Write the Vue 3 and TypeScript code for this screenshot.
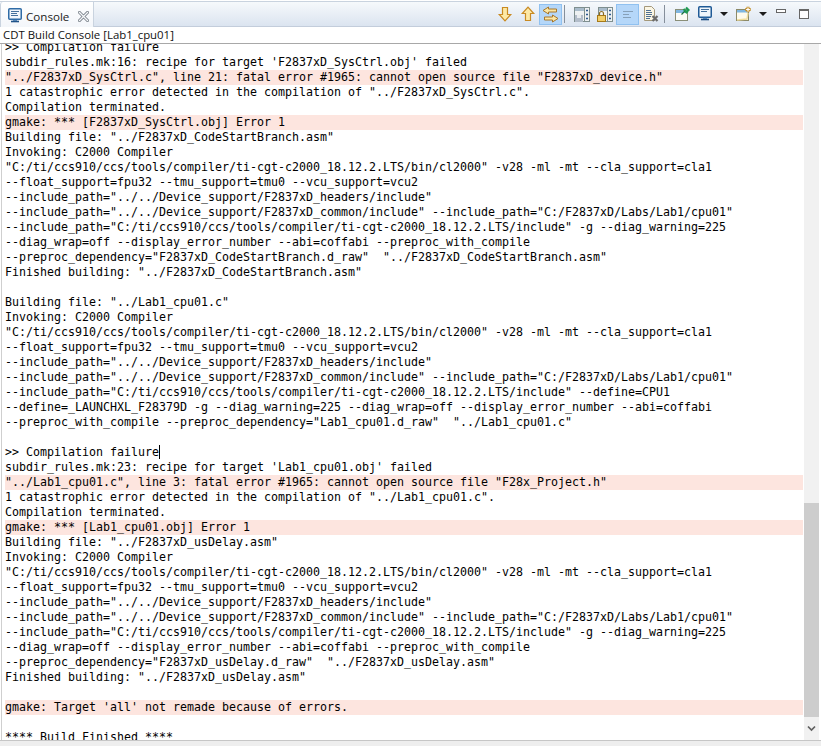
<script setup lang="ts">
type Line = { text: string; error?: boolean };
const raw: string = `>> Compilation failure
subdir_rules.mk:16: recipe for target 'F2837xD_SysCtrl.obj' failed
!"../F2837xD_SysCtrl.c", line 21: fatal error #1965: cannot open source file "F2837xD_device.h"
1 catastrophic error detected in the compilation of "../F2837xD_SysCtrl.c".
Compilation terminated.
!gmake: *** [F2837xD_SysCtrl.obj] Error 1
Building file: "../F2837xD_CodeStartBranch.asm"
Invoking: C2000 Compiler
"C:/ti/ccs910/ccs/tools/compiler/ti-cgt-c2000_18.12.2.LTS/bin/cl2000" -v28 -ml -mt --cla_support=cla1
--float_support=fpu32 --tmu_support=tmu0 --vcu_support=vcu2
--include_path="../../Device_support/F2837xD_headers/include"
--include_path="../../Device_support/F2837xD_common/include" --include_path="C:/F2837xD/Labs/Lab1/cpu01"
--include_path="C:/ti/ccs910/ccs/tools/compiler/ti-cgt-c2000_18.12.2.LTS/include" -g --diag_warning=225
--diag_wrap=off --display_error_number --abi=coffabi --preproc_with_compile
--preproc_dependency="F2837xD_CodeStartBranch.d_raw"  "../F2837xD_CodeStartBranch.asm"
Finished building: "../F2837xD_CodeStartBranch.asm"

Building file: "../Lab1_cpu01.c"
Invoking: C2000 Compiler
"C:/ti/ccs910/ccs/tools/compiler/ti-cgt-c2000_18.12.2.LTS/bin/cl2000" -v28 -ml -mt --cla_support=cla1
--float_support=fpu32 --tmu_support=tmu0 --vcu_support=vcu2
--include_path="../../Device_support/F2837xD_headers/include"
--include_path="../../Device_support/F2837xD_common/include" --include_path="C:/F2837xD/Labs/Lab1/cpu01"
--include_path="C:/ti/ccs910/ccs/tools/compiler/ti-cgt-c2000_18.12.2.LTS/include" --define=CPU1
--define=_LAUNCHXL_F28379D -g --diag_warning=225 --diag_wrap=off --display_error_number --abi=coffabi
--preproc_with_compile --preproc_dependency="Lab1_cpu01.d_raw"  "../Lab1_cpu01.c"

>> Compilation failure
subdir_rules.mk:23: recipe for target 'Lab1_cpu01.obj' failed
!"../Lab1_cpu01.c", line 3: fatal error #1965: cannot open source file "F28x_Project.h"
1 catastrophic error detected in the compilation of "../Lab1_cpu01.c".
Compilation terminated.
!gmake: *** [Lab1_cpu01.obj] Error 1
Building file: "../F2837xD_usDelay.asm"
Invoking: C2000 Compiler
"C:/ti/ccs910/ccs/tools/compiler/ti-cgt-c2000_18.12.2.LTS/bin/cl2000" -v28 -ml -mt --cla_support=cla1
--float_support=fpu32 --tmu_support=tmu0 --vcu_support=vcu2
--include_path="../../Device_support/F2837xD_headers/include"
--include_path="../../Device_support/F2837xD_common/include" --include_path="C:/F2837xD/Labs/Lab1/cpu01"
--include_path="C:/ti/ccs910/ccs/tools/compiler/ti-cgt-c2000_18.12.2.LTS/include" -g --diag_warning=225
--diag_wrap=off --display_error_number --abi=coffabi --preproc_with_compile
--preproc_dependency="F2837xD_usDelay.d_raw"  "../F2837xD_usDelay.asm"
Finished building: "../F2837xD_usDelay.asm"

!gmake: Target 'all' not remade because of errors.

**** Build Finished ****`;
const lines: Line[] = raw.split("\n").map((l: string) =>
  l.startsWith("!") ? { text: l.slice(1), error: true } : { text: l }
);
</script>

<template>
  <div class="view">
    <div class="topbar">
      <div class="tab">
        <svg class="tabicon" width="16" height="16" viewBox="0 0 16 16">
          <rect x="1.75" y="0.75" width="12.5" height="10.5" rx="1" fill="#f1f6fb" stroke="#2f6ba6" stroke-width="1.5" />
          <path d="M4 3.5h8M4 5.5h6M4 7.5h7" stroke="#44709c" />
          <path d="M4 13.5h8" stroke="#1f5288" stroke-width="1.6" />
          <path d="M6 12h4" stroke="#2f6ba6" stroke-width="1.4" />
        </svg>
        <span class="tabname">Console</span>
        <svg class="tabclose" width="11" height="11" viewBox="0 0 11 11">
          <path d="M1.5 1.5l8 8M9.5 1.5l-8 8" stroke="#6f7780" stroke-width="3" stroke-linecap="square" />
          <path d="M1.5 1.5l8 8M9.5 1.5l-8 8" stroke="#f7f8fa" stroke-width="1.4" stroke-linecap="square" />
        </svg>
      </div>
      <div class="tools">
        <span class="tool">
          <svg width="16" height="16" viewBox="0 0 16 16"><path d="M5.5 1.5h5v7h3.2L8 14.8 2.3 8.5h3.2z" fill="#fde9a6" stroke="#c98a22" stroke-width="1.2" /></svg>
        </span>
        <span class="tool">
          <svg width="16" height="16" viewBox="0 0 16 16"><path d="M5.5 14.5h5v-7h3.2L8 1.2 2.3 7.5h3.2z" fill="#fde9a6" stroke="#c98a22" stroke-width="1.2" /></svg>
        </span>
        <span class="tool on">
          <svg width="17" height="17" viewBox="0 0 17 17"><path d="M6.5 1L1 4.5 6.5 8V6h8V3h-8z" fill="#fce7a4" stroke="#a8772a" /><path d="M10.5 9L16 12.5 10.5 16v-2h-8v-3h8z" fill="#fce7a4" stroke="#a8772a" /></svg>
        </span>
        <span class="sep"></span>
        <span class="tool">
          <svg width="16" height="16" viewBox="0 0 16 16"><rect x="0.5" y="1.5" width="15" height="14" fill="#eef1f2" stroke="#7f8f8f" /><rect x="1" y="2" width="9" height="3" fill="#a9bccb" /><path d="M10.5 1.5v14" stroke="#7f8f8f" /><path d="M12 4.5h2M12 8.5h2M12 12.5h2" stroke="#2c5a90" stroke-width="1.5" /><rect x="1" y="9" width="8" height="7" fill="#b3bdca" /><rect x="3" y="9" width="4" height="3" fill="#e7ebef" /></svg>
        </span>
        <span class="tool">
          <svg width="16" height="16" viewBox="0 0 16 16"><rect x="1.5" y="1.5" width="14" height="14" fill="#f1f3f2" stroke="#7f8f8f" /><rect x="2" y="2" width="8" height="3" fill="#a9bccb" /><path d="M10.5 1.5v14" stroke="#7f8f8f" /><path d="M12 4.5h2M12 8.5h2M12 12.5h2" stroke="#2c5a90" stroke-width="1.5" /><rect x="0.5" y="9.5" width="8" height="6" fill="#f3cf68" stroke="#a67a1a" /><path d="M2.5 9.5V7.5a2 2 0 0 1 4 0v2" fill="none" stroke="#8a6a20" stroke-width="1.2" /></svg>
        </span>
        <span class="tool on">
          <svg width="16" height="16" viewBox="0 0 16 16"><path d="M3 5.5h10M3 8.5h6M3 11.5h8" stroke="#86a0b8" /></svg>
        </span>
        <span class="tool">
          <svg width="16" height="16" viewBox="0 0 16 16"><path d="M1.5 0.5h7l3 3v11h-10z" fill="#fbf6e4" stroke="#a4987a" /><path d="M3 4.5h5M3 6.5h6M3 8.5h6M3 10.5h5M3 12.5h4" stroke="#4f7093" /><path d="M9.5 10l5 5M14.5 10l-5 5" stroke="#6c6c6c" stroke-width="2.2" /></svg>
        </span>
        <span class="sep"></span>
        <span class="tool">
          <svg width="16" height="16" viewBox="0 0 16 16"><rect x="1.5" y="3.5" width="12" height="11" fill="#fbfbf6" stroke="#8a8f78" /><rect x="2" y="4" width="11" height="3" fill="#7fb6e0" /><path d="M7.5 8.5l3.5-3.5" stroke="#17713f" stroke-width="1.3" /><path d="M9.5 3l4 4M12 1.5l2.5 2.5-3 3" fill="none" stroke="#1f9a52" stroke-width="2.2" /></svg>
        </span>
        <span class="tool">
          <svg width="16" height="16" viewBox="0 0 16 16"><rect x="1.75" y="0.75" width="12.5" height="10.5" rx="1" fill="#f1f6fb" stroke="#1f5a96" stroke-width="1.5" /><path d="M4 3.5h8M4 5.5h6" stroke="#44709c" /><path d="M4 13.5h8" stroke="#1a4a80" stroke-width="1.6" /><path d="M6 12h4" stroke="#2f6ba6" stroke-width="1.4" /></svg>
        </span>
        <span class="caret"></span>
        <span class="tool">
          <svg width="16" height="16" viewBox="0 0 16 16"><rect x="0.5" y="3.5" width="12" height="11" fill="#fdfaec" stroke="#8c8a68" /><rect x="1" y="4" width="11" height="2.5" fill="#7fb6e0" /><path d="M1 14l10-1 1-6" fill="none" stroke="#f0dd9c" stroke-width="1.4" /><path d="M12 0.8v5.4M9.3 3.5h5.4" stroke="#c48f2a" stroke-width="3" /><path d="M12 1.6v3.8M10.1 3.5h3.8" stroke="#fff" stroke-width="1.2" /></svg>
        </span>
        <span class="caret"></span>
        <span class="wintool"><i class="minbtn"></i></span>
        <span class="wintool max"><i class="maxbtn"></i></span>
      </div>
    </div>
    <div class="title">CDT Build Console [Lab1_cpu01]</div>
    <div class="body">
      <div class="scrollarea">
        <div class="content">
          <div v-for="(l, i) in lines" :key="i" class="line" :class="{ err: l.error }">{{ l.text }}<span v-if="i === 27" class="cursor"></span></div>
        </div>
      </div>
      <div class="scrollbar">
        <div class="track"></div>
        <div class="thumb"></div>
        <div class="arrow">
          <svg width="9" height="7" viewBox="0 0 9 7"><path d="M1 1.5l3.5 3.5L8 1.5" fill="none" stroke="#606060" stroke-width="1.7" /></svg>
        </div>
      </div>
    </div>
    <div class="foot"></div>
  </div>
</template>

<style scoped>
.view {
  width: 821px;
  height: 746px;
  box-sizing: border-box;
  padding-top: 1px;
  background: #fff;
  display: flex;
  flex-direction: column;
  overflow: hidden;
}
.topbar {
  height: 26px;
  flex: none;
  box-sizing: border-box;
  border-top: 1px solid #c9d3df;
  border-bottom: 1px solid #c3cddb;
  background: linear-gradient(#f6f9fc, #dbe4f0);
  display: flex;
  justify-content: space-between;
}
.tab {
  width: 94px;
  height: 25px;
  box-sizing: border-box;
  background: linear-gradient(#ffffff, #f3f6fa);
  border-right: 1px solid #c9d3df;
  border-left: 1px solid #c9d3df;
  border-top-left-radius: 3px;
  display: flex;
  align-items: center;
  padding: 3px 0 0 6px;
  font: 11.6px "Open Sans", "Liberation Sans", sans-serif;
  color: #222;
}
.tabname {
  margin-left: 3px;
}
.tabclose {
  margin-left: 9px;
}
.tools {
  display: flex;
  align-items: center;
  padding-right: 7px;
}
.tool {
  width: 23px;
  height: 21px;
  box-sizing: border-box;
  display: flex;
  align-items: center;
  justify-content: center;
}
.tool.on {
  background: #b5d7f9;
  border: 1px solid #90c1f0;
}
.sep {
  width: 1px;
  height: 18px;
  background: #858f9b;
  margin: 0 5px 0 2px;
}
.caret {
  width: 0;
  height: 0;
  border-left: 4px solid transparent;
  border-right: 4px solid transparent;
  border-top: 4px solid #1c1c1c;
  margin: 0 4px;
}
.wintool {
  width: 20px;
  height: 21px;
  display: flex;
  justify-content: center;
}
.wintool.max {
  margin-left: 3px;
}
.minbtn {
  width: 8px;
  height: 2px;
  margin-top: 5.5px;
  border: 1px solid #666;
  background: #fff;
}
.maxbtn {
  width: 8px;
  height: 7px;
  margin-top: 5.5px;
  border: 1px solid #666;
  border-top-width: 2px;
  background: #fdfdfe;
}
.title {
  height: 17px;
  flex: none;
  box-sizing: border-box;
  padding-left: 3px;
  font: 11.4px/16px "Open Sans", "Liberation Sans", sans-serif;
  color: #111;
  border-bottom: 1px solid #a8a8a8;
}
.body {
  height: 696px;
  flex: none;
  display: flex;
  margin-left: 1px;
  margin-right: 2px;
  border-left: 1px solid #cfcfcf;
}
.scrollarea {
  flex: 1;
  min-width: 0;
  overflow: hidden;
}
.content {
  margin-top: -4px;
}
.line {
  height: 15px;
  margin: 0 1px 0 3px;
  font: 11.63px/15px "DejaVu Sans Mono", monospace;
  color: #000;
  white-space: pre;
}
.line.err {
  background: #fde5df;
}
.cursor {
  display: inline-block;
  width: 1px;
  height: 14px;
  background: #000;
  vertical-align: -3px;
}
.scrollbar {
  width: 15px;
  flex: none;
  display: flex;
  flex-direction: column;
  background: #f1f1f1;
}
.track {
  height: 459px;
  flex: none;
}
.thumb {
  height: 214px;
  flex: none;
  background: #cdcdcd;
}
.arrow {
  flex: 1;
  display: flex;
  align-items: center;
  justify-content: center;
}
.foot {
  flex: 1;
  border-top: 1px solid #c6c6c6;
  background: #eeeeee;
}
</style>
